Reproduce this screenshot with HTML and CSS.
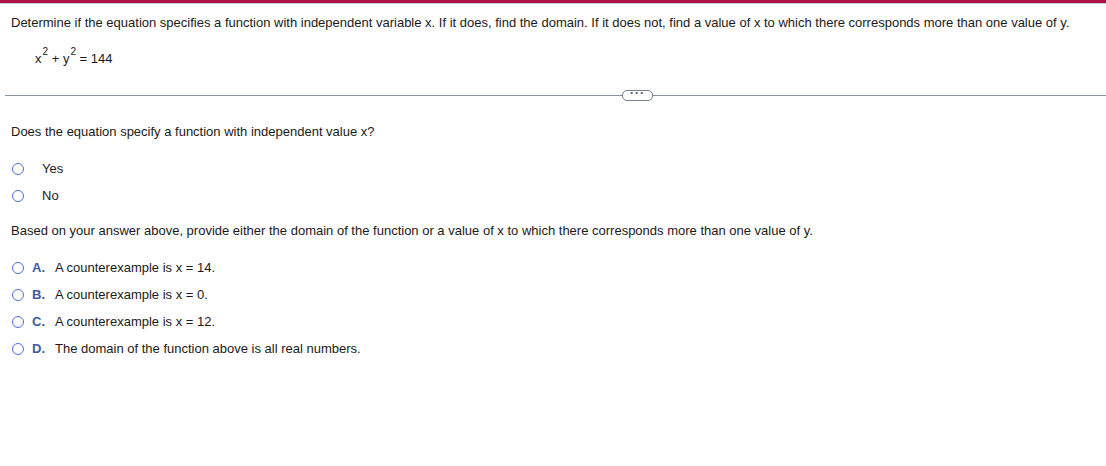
FILE: index.html
```html
<html>

<head>
  <link rel="stylesheet" href="styles.css">
</head>

<body>
  <div class="topbar"></div>

  <div class="question">
    <p class="prompt">Determine if the equation specifies a function with independent variable x. If it does, find the domain. If it does not, find a value of x to which there corresponds more than one value of y.</p>
    <p class="equation">x<sup>2</sup> + y<sup>2</sup> = 144</p>
  </div>

  <div class="divider">
    <span class="more">&middot;&middot;&middot;</span>
  </div>

  <div class="answers">
    <p class="prompt">Does the equation specify a function with independent value x?</p>

    <div class="choices yesno">
      <label class="choice"><span class="radio"></span><span class="text">Yes</span></label>
      <label class="choice"><span class="radio"></span><span class="text">No</span></label>
    </div>

    <p class="prompt">Based on your answer above, provide either the domain of the function or a value of x to which there corresponds more than one value of y.</p>

    <div class="choices lettered">
      <label class="choice"><span class="radio"></span><span class="letter">A.</span><span class="text">A counterexample is x = 14.</span></label>
      <label class="choice"><span class="radio"></span><span class="letter">B.</span><span class="text">A counterexample is x = 0.</span></label>
      <label class="choice"><span class="radio"></span><span class="letter">C.</span><span class="text">A counterexample is x = 12.</span></label>
      <label class="choice"><span class="radio"></span><span class="letter">D.</span><span class="text">The domain of the function above is all real numbers.</span></label>
    </div>
  </div>
</body>

</html>
```

FILE: styles.css
```css
body {
  margin: 0;
  font-family: "Liberation Sans", Arial, sans-serif;
  font-size: 13px;
  color: #1a1a1a;
  background: #ffffff;
}

p {
  margin: 0;
}

/* crimson strip along the top */
.topbar {
  height: 3px;
  background: #ae1047;
  border-bottom: 1px solid #c9d2dd;
}

.question {
  padding: 11px 11px 0 11px;
}

.equation {
  margin-top: 21px;
  padding-left: 24px;
}

.equation sup {
  font-size: 10px;
  vertical-align: 8px;
  line-height: 0;
  margin-left: 1px;
}

/* grey rule with the little "..." pill */
.divider {
  position: relative;
  margin: 29px 0 0 5px;
  height: 1px;
  background: #8593a3;
}

.more {
  position: absolute;
  left: 617px;
  top: -5px;
  width: 29px;
  height: 9px;
  border: 1px solid #75818f;
  border-radius: 5px;
  background: #fff;
  color: #4d5866;
  font-size: 12px;
  line-height: 5px;
  text-align: center;
  font-weight: bold;
  letter-spacing: 1px;
}

.answers {
  padding: 28px 11px 0 11px;
}

.choices {
  display: flex;
  flex-direction: column;
}

.yesno {
  margin: 22px 0 20px 1px;
  gap: 12px;
}

.lettered {
  margin: 22px 0 0 1px;
  gap: 12px;
}

.choice {
  display: flex;
  align-items: center;
  height: 15px;
}

.radio {
  width: 10px;
  height: 10px;
  border: 1.5px solid #4a6fdc;
  border-radius: 50%;
  flex: none;
}

.yesno .text {
  margin-left: 18px;
}

.letter {
  margin-left: 8px;
  width: 23px;
  color: #3c5aa8;
  font-weight: bold;
}
```
